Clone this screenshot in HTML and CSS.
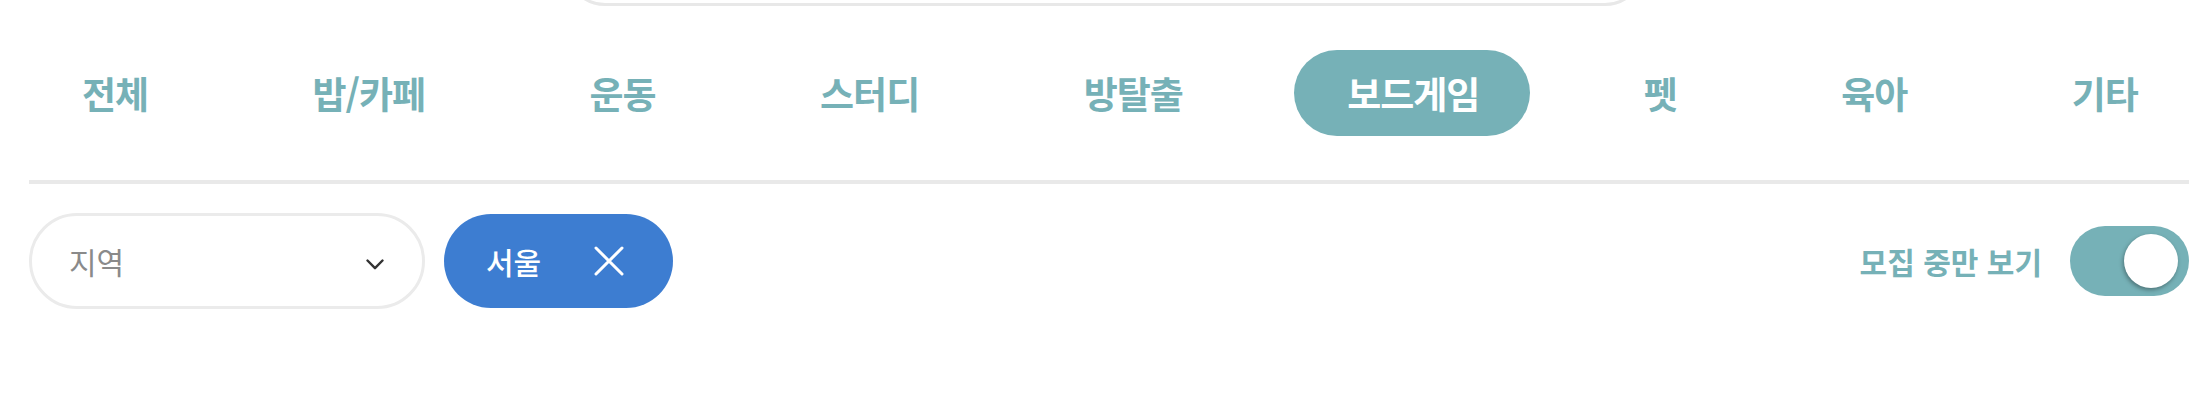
FILE: index.html
```html
<!DOCTYPE html>
<html lang="ko">
<head>
<meta charset="utf-8">
<title>카테고리</title>
<link rel="stylesheet" href="styles.css">
</head>
<body>
<div class="search-wrap"><div class="search"></div></div>
<div class="page">
  <nav class="tabs">
    <span class="tab">전체</span>
    <span class="tab">밥/카페</span>
    <span class="tab">운동</span>
    <span class="tab">스터디</span>
    <span class="tab">방탈출</span>
    <span class="tab active">보드게임</span>
    <span class="tab">펫</span>
    <span class="tab">육아</span>
    <span class="tab">기타</span>
  </nav>
  <div class="divider"></div>
  <div class="filters">
    <div class="filter-left">
      <div class="select">
        <span class="select-label">지역</span>
        <svg class="chevron" viewBox="0 0 18 11" width="18" height="11"><polyline points="1.5,1.5 9,9.2 16.5,1.5" fill="none" stroke="#333" stroke-width="2.4" stroke-linecap="round" stroke-linejoin="round"/></svg>
      </div>
      <div class="chip">
        <span class="chip-label">서울</span>
        <svg class="chip-x" viewBox="0 0 30 30" width="30" height="30"><path d="M2 2 L28 28 M28 2 L2 28" stroke="#fff" stroke-width="3" stroke-linecap="round"/></svg>
      </div>
    </div>
    <div class="filter-right">
      <span class="toggle-label">모집 중만 보기</span>
      <div class="toggle"><div class="knob"></div></div>
    </div>
  </div>
</div>
</body>
</html>
```
FILE: styles.css
```css
* { box-sizing: border-box; }
html, body { margin: 0; padding: 0; background: #fff; }
body {
  font-family: "Noto Sans CJK KR", "Noto Sans", sans-serif;
  width: 2210px;
  overflow: hidden;
}
.search-wrap {
  display: flow-root;
  height: 6px;
}
.search {
  width: 1080px;
  height: 80px;
  margin: -74px auto 0;
  border: 3px solid #e8e8e8;
  border-radius: 44px;
  background: #fff;
}
.page {
  padding: 0 21px 0 29px;
}
.tabs {
  display: flex;
  justify-content: space-between;
  align-items: center;
  margin-top: 44px;
}
.tab {
  display: block;
  height: 86px;
  line-height: 86px;
  padding: 0 51px 0 53px;
  border-radius: 43px;
  font-size: 37px;
  font-weight: 700;
  color: #76b1b7;
  white-space: nowrap;
  letter-spacing: -1px;
}
.tab.active {
  background: #76b1b7;
  color: #fff;
}
.divider {
  height: 4px;
  background: #e9e9e9;
  margin-top: 44px;
}
.filters {
  display: flex;
  justify-content: space-between;
  align-items: center;
  margin-top: 29px;
  height: 96px;
}
.filter-left {
  display: flex;
  align-items: center;
  gap: 19px;
}
.select {
  width: 396px;
  height: 96px;
  border: 3px solid #ebebeb;
  border-radius: 48px;
  display: flex;
  align-items: center;
  justify-content: space-between;
  padding: 0 38px 0 37px;
}
.select-label {
  font-size: 30px;
  color: #8a8a8a;
  font-weight: 400;
}
.chevron { display: block; margin-top: 6px; }
.chip {
  height: 94px;
  border-radius: 47px;
  background: #3d7dd1;
  display: flex;
  align-items: center;
  padding: 0 49px 0 42px;
  gap: 53px;
}
.chip-label {
  font-size: 30px;
  font-weight: 500;
  color: #fff;
}
.chip-x { display: block; }
.filter-right {
  display: flex;
  align-items: center;
  gap: 28px;
}
.toggle-label {
  font-size: 30px;
  font-weight: 700;
  color: #76b1b7;
  letter-spacing: 0;
}
.toggle {
  width: 119px;
  height: 70px;
  border-radius: 35px;
  background: #76b1b7;
  display: flex;
  align-items: center;
  justify-content: flex-end;
  padding-right: 11px;
}
.knob {
  width: 54px;
  height: 54px;
  border-radius: 50%;
  background: #fff;
  box-shadow: -1px 2px 4px rgba(0, 0, 0, 0.35);
}
```
